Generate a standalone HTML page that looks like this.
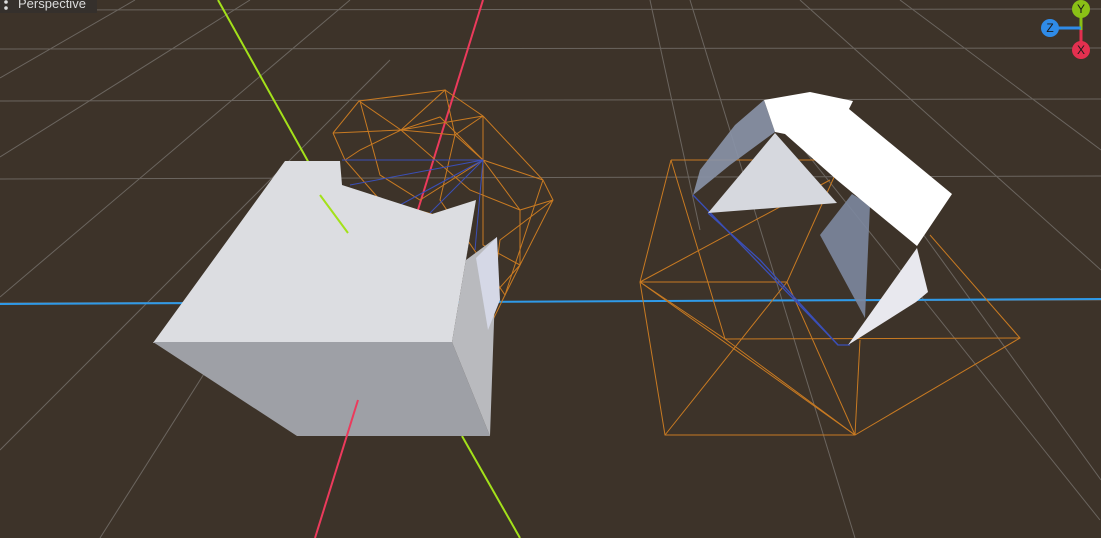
<!DOCTYPE html>
<html><head><meta charset="utf-8"><style>
html,body{margin:0;padding:0;background:#3d3329;overflow:hidden}
svg{display:block}
.lbl{position:absolute;left:0;top:0;height:12px;background:#35302c;color:#d8d8d8;font:13px "Liberation Sans",sans-serif;line-height:7px;padding:0 6px 0 18px;width:70px;overflow:hidden}
</style></head><body>
<svg width="1101" height="538" viewBox="0 0 1101 538" xmlns="http://www.w3.org/2000/svg">
<rect width="1101" height="538" fill="#3d3329"/>
<g stroke="#6b655f" stroke-width="1" fill="none">
<line x1="0" y1="10" x2="1101" y2="9"/>
<line x1="0" y1="49" x2="1101" y2="48"/>
<line x1="0" y1="101" x2="1101" y2="99"/>
<line x1="0" y1="179" x2="1101" y2="176"/>
<line x1="0" y1="303" x2="1101" y2="300"/>
<line x1="0" y1="78" x2="135" y2="0"/>
<line x1="0" y1="157" x2="250" y2="0"/>
<line x1="0" y1="297" x2="350" y2="0"/>
<line x1="0" y1="450" x2="390" y2="60"/>
<line x1="100" y1="538" x2="330" y2="175"/>
<line x1="650" y1="0" x2="700" y2="230"/>
<line x1="690" y1="0" x2="855" y2="538"/>
<line x1="800" y1="0" x2="1101" y2="270"/>
<line x1="900" y1="0" x2="1101" y2="150"/>
<line x1="920" y1="230" x2="1101" y2="480"/>
<line x1="780" y1="120" x2="1100" y2="520"/>
</g>
<line x1="0" y1="304" x2="1101" y2="299" stroke="#2f9ae8" stroke-width="2"/>
<line x1="218" y1="0" x2="348" y2="233" stroke="#a3e11a" stroke-width="2"/>
<line x1="462" y1="436" x2="520" y2="538" stroke="#a3e11a" stroke-width="2"/>
<line x1="483" y1="0" x2="417" y2="213" stroke="#ec3a5c" stroke-width="2"/>
<!-- left sphere wireframe -->
<g stroke="#c87a22" stroke-width="1" fill="none">
<polyline points="333,133 359,101 445,90 483,116 543,180 553,200 520,265 505,295 488,330"/>
<polyline points="333,133 345,160 380,200 432,214"/>
<polyline points="359,101 401,130 445,90 455,135 483,160 543,180"/>
<polyline points="333,133 401,130 483,116 455,135 401,130 360,150 345,160"/>
<polyline points="401,130 440,117 483,160 520,210 553,200"/>
<polyline points="483,116 483,245 520,265"/>
<polyline points="455,135 440,200 505,295 543,180"/>
<polyline points="360,101 380,175 420,200 483,160"/>
<polyline points="553,200 500,240 488,330"/>
<polyline points="520,210 520,265 480,310"/>
<polyline points="401,130 470,190 520,210"/>
</g>
<g stroke="#3a4fb8" stroke-width="1" fill="none">
<polyline points="342,160 483,160 475,250"/>
<line x1="483" y1="160" x2="350" y2="185"/><line x1="483" y1="160" x2="400" y2="205"/><line x1="483" y1="160" x2="430" y2="213"/>
</g>
<!-- cube -->
<polygon points="153,343 285,161 340,161 342,185 432,214 476,200 452,342" fill="#dcdde1"/>
<polygon points="153,342 452,342 490,436 297,436" fill="#9ea0a6"/>
<polygon points="452,342 476,200 466,260 497,237 490,436" fill="#b9babe"/>
<polygon points="476,258 497,237 500,300 488,330" fill="#d5d8e6"/>
<line x1="358" y1="400" x2="315" y2="538" stroke="#ec3a5c" stroke-width="2"/>
<line x1="320" y1="195" x2="348" y2="233" stroke="#a3e11a" stroke-width="2"/>
<!-- right wireframe -->
<g stroke="#c87a22" stroke-width="1" fill="none">
<polyline points="671,160 850,160"/>
<polyline points="671,160 640,282 665,435 855,435 1020,338 930,235"/>
<polyline points="640,282 787,282 855,435"/>
<polyline points="671,160 725,339 855,435"/>
<polyline points="640,282 725,339 1020,338"/>
<polyline points="640,282 855,435"/>
<polyline points="665,435 787,282 835,175"/>
<polyline points="640,282 830,180"/>
<polyline points="855,435 860,340"/>
</g>
<g stroke="#3a4fb8" stroke-width="1.3" fill="none">
<polyline points="693,195 838,345 850,345"/>
<polyline points="708,213 760,260 838,345"/>
</g>
<polygon points="764,100 775,132 730,165 693,195 700,170 735,125" fill="#8a94a8" opacity="0.9"/>
<polygon points="852,194 870,205 865,318 820,235" fill="#7c879e" opacity="0.9"/>
<polygon points="775,133 708,213 837,203" fill="#d6d8de"/>
<polygon points="764,100 810,92 853,101 849,109 952,194 917,246 837,180 785,134 775,132" fill="#ffffff"/>
<polygon points="917,248 928,292 916,302 848,345" fill="#e8e8ee"/>
<!-- gizmo -->
<line x1="1081" y1="10" x2="1081" y2="50" stroke="#8ac016" stroke-width="3"/>
<line x1="1081" y1="30" x2="1081" y2="50" stroke="#e3304f" stroke-width="3"/>
<line x1="1050" y1="28" x2="1081" y2="28" stroke="#2f8be8" stroke-width="3"/>
<circle cx="1081" cy="9" r="9" fill="#8ac016"/>
<circle cx="1050" cy="28" r="9" fill="#2f8be8"/>
<circle cx="1081" cy="50" r="9" fill="#e3304f"/>
<g font-family="Liberation Sans,sans-serif" font-size="12" fill="#1a1a1a" text-anchor="middle">
<text x="1081" y="13">Y</text><text x="1050" y="32">Z</text><text x="1081" y="54">X</text>
</g>
<rect x="0" y="0" width="97" height="13" fill="#35302c"/>
<circle cx="6" cy="2" r="1.8" fill="#ddd"/><circle cx="6" cy="8" r="1.8" fill="#ddd"/>
<text x="18" y="8" font-family="Liberation Sans,sans-serif" font-size="13" fill="#dcdcdc">Perspective</text>
</svg>
</body></html>
